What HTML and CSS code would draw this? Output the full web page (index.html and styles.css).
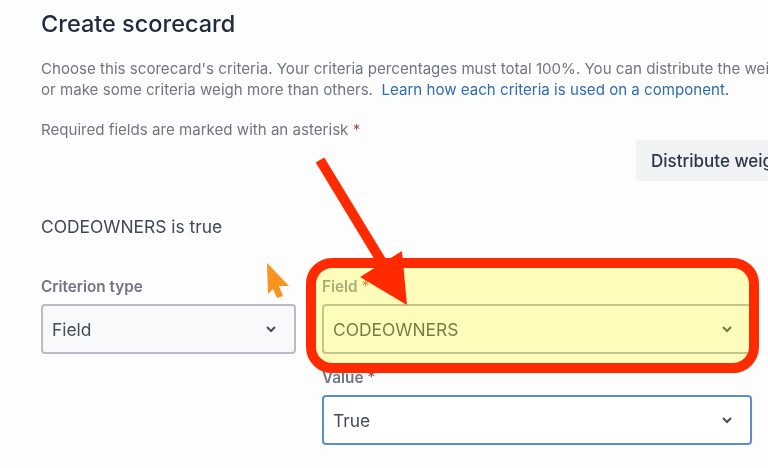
FILE: index.html
```html
<!DOCTYPE html>
<html lang="en">
<head>
<meta charset="utf-8">
<title>Create scorecard</title>
<link rel="stylesheet" href="styles.css">
</head>
<body>
<main class="page">
  <h1 class="title">Create scorecard</h1>
  <p class="desc">Choose this scorecard's criteria. Your criteria percentages must total 100%. You can distribute the weight evenly<br>or make some criteria weigh more than others.&nbsp; <a class="link" href="#">Learn how each criteria is used on a component.</a></p>
  <p class="required">Required fields are marked with an asterisk <span class="star">*</span></p>
  <div class="actions"><button class="btn" type="button">Distribute weight evenly</button></div>
  <h2 class="criterion">CODEOWNERS is true</h2>
  <div class="form">
    <div class="col">
      <div class="group">
        <label class="label">Criterion type</label>
        <div class="select"><span>Field</span><svg class="chev" viewBox="0 0 12 8"><path d="M2 2l4 4 4-4"/></svg></div>
      </div>
    </div>
    <div class="col">
      <div class="group">
        <label class="label">Field <span class="star">*</span></label>
        <div class="select field"><span>CODEOWNERS</span><svg class="chev" viewBox="0 0 12 8"><path d="M2 2l4 4 4-4"/></svg></div>
      </div>
      <div class="group value">
        <label class="label">Value <span class="star">*</span></label>
        <div class="select focus"><span>True</span><svg class="chev" viewBox="0 0 12 8"><path d="M2 2l4 4 4-4"/></svg></div>
      </div>
    </div>
  </div>
</main>
<div class="frame"></div>
<svg class="marks" viewBox="0 0 768 468">
  <path class="cursor" d="M267 263L289 286 279 286 283 296 277 298 273 289 268 294Z"/>
  <path class="shaft" d="M320 160L388 272"/>
  <path class="head" d="M407 305L402 251 360 277Z"/>
</svg>
</body>
</html>
```
FILE: styles.css
```css
* { box-sizing: border-box; }
html, body { margin: 0; height: 100%; }
body {
  position: relative;
  width: 768px;
  height: 468px;
  overflow: hidden;
  background: #fdfdfe;
  font-family: Inter, "Liberation Sans", sans-serif;
  color: #2b3648;
}
.page { padding: 8px 0 0 41px; width: 1000px; filter: blur(0.4px); }
.title { margin: 0; font-size: 23.5px; line-height: 32px; font-weight: 500; color: #1f2a3d; }
.desc { margin: 18px 0 0; font-size: 15.1px; line-height: 21px; color: #6f7682; white-space: nowrap; }
.link { color: #2f6cb0; text-decoration: none; }
.required { margin: 20px 0 0; font-size: 15.1px; line-height: 20px; color: #6f7682; }
.star { color: #b5493f; }
.actions { margin: 0 0 0 595px; }
.btn {
  height: 41px; padding: 0 15px; border: 0; border-radius: 4px;
  background: #f1f2f4; color: #2b3648;
  font: 500 17px Inter, "Liberation Sans", sans-serif;
  white-space: nowrap;
}
.criterion { margin: 36px 0 0; font-size: 17.4px; line-height: 20px; font-weight: 400; color: #3f4857; }
.form { display: flex; gap: 26px; margin-top: 40px; }
.col { display: flex; flex-direction: column; }
.col:first-child { width: 255px; }
.col:last-child { width: 430px; }
.group { display: flex; flex-direction: column; gap: 7px; }
.value { margin-top: 14px; }
.label { font-size: 15.3px; line-height: 20px; font-weight: 600; color: #6f7682; }
.select {
  display: flex; align-items: center; justify-content: space-between;
  height: 50px; padding: 0 17px 0 9px;
  border: 2px solid #b9bcc5; border-radius: 4px;
  background: #f8f9fa; font-size: 17.4px; color: #434c5b;
}
.field { background: #fdfdfe; color: #141e32; border-color: #9aa0aa; }
.focus { background: #fff; border-color: #5a8fc7; color: #434c5b; }
.chev { width: 12px; height: 8px; fill: none; stroke: #434c5b; stroke-width: 2; }
.field .chev { stroke: #141e32; }
.frame {
  position: absolute; left: 306px; top: 258px; width: 453px; height: 115px;
  border: 10px solid #ff2a00; border-radius: 26px;
  background: rgba(252, 250, 96, 0.42);
}
.marks { position: absolute; left: 0; top: 0; width: 768px; height: 468px; }
.cursor { fill: #f7931e; }
.shaft { stroke: #ff2a00; stroke-width: 10; fill: none; }
.head { fill: #ff2a00; }
```
